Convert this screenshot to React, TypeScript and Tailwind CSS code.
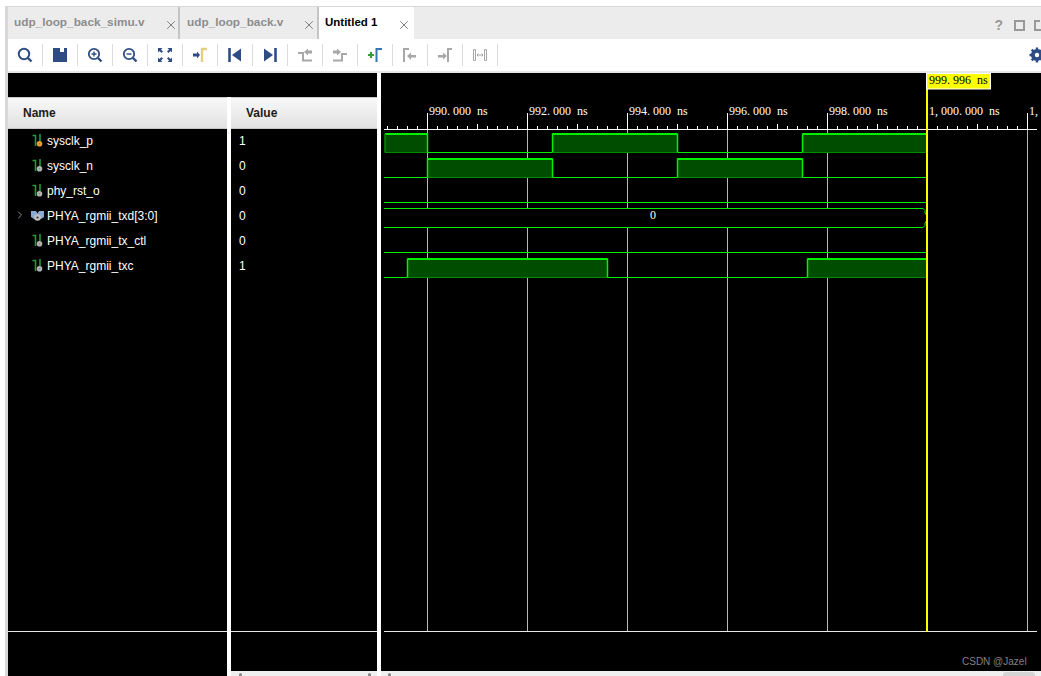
// Vivado 波形窗口 —— 标签栏 / 工具栏 / 名称值列 / 波形区
import type { ReactNode } from 'react';
import { X, ChevronRight } from 'lucide-react';

const SANS = 'font-["Liberation_Sans",Arial,sans-serif]';
const NAVY = '#2f4d85';
const GREY = '#a8a8a8';

function Tab({ label, active, className }: { label: string; active?: boolean; className: string }) {
  return (
    <div
      className={`flex h-full items-center justify-between font-bold ${className} ${
        active ? 'bg-white text-[11.5px] text-black' : 'border-r-[2px] border-[#c4c4c4] text-[11.8px] text-[#8c8c8c]'
      }`}
    >
      <span>{label}</span>
      <X size={14} strokeWidth={1.6} className="mt-[4px] text-[#777]" />
    </div>
  );
}

// 工具栏图标，统一 16x16 画布
const icons: ReactNode[] = [
  <>
    <circle cx="7" cy="7" r="5.2" fill="none" stroke={NAVY} strokeWidth="2" />
    <path d="M11 11l3.5 3.5" stroke={NAVY} strokeWidth="2.4" />
  </>,
  <path d="M1 1h7v4h4V1h3v14H1z" fill={NAVY} />,
  <>
    <circle cx="7" cy="7" r="5.2" fill="none" stroke={NAVY} strokeWidth="1.8" />
    <path d="M11 11l3.5 3.5" stroke={NAVY} strokeWidth="2.4" />
    <path d="M4.5 7h5M7 4.5v5" stroke={NAVY} strokeWidth="1.4" />
  </>,
  <>
    <circle cx="7" cy="7" r="5.2" fill="none" stroke={NAVY} strokeWidth="1.8" />
    <path d="M11 11l3.5 3.5" stroke={NAVY} strokeWidth="2.4" />
    <path d="M4.5 7h5" stroke={NAVY} strokeWidth="1.4" />
  </>,
  <path
    d="M1 1h4.5L4 2.5 6 4.5 4.5 6 2.5 4 1 5.5zM15 1v4.5L13.5 4l-2 2L10 4.5l2-2L10.5 1zM1 15v-4.5L2.5 12l2-2L6 11.5l-2 2L5.5 15zM15 15h-4.5L12 13.5l-2-2 1.5-1.5 2 2 1.5-1.5z"
    fill={NAVY}
  />,
  <>
    <path d="M1 6.5h4v-2l3 3.5-3 3.5v-2H1z" fill={NAVY} />
    <path d="M10 15V2h5" fill="none" stroke="#e6cf7c" strokeWidth="2.4" />
  </>,
  <>
    <path d="M2.5 1v14" stroke={NAVY} strokeWidth="2.6" />
    <path d="M14 1.5v13L5 8z" fill={NAVY} />
  </>,
  <>
    <path d="M13.5 1v14" stroke={NAVY} strokeWidth="2.6" />
    <path d="M2 1.5v13L11 8z" fill={NAVY} />
  </>,
  <>
    <path d="M1 6h5v7.5h9" fill="none" stroke={GREY} strokeWidth="2" />
    <path d="M7 5l4-3.5v2h4v3h-4v2z" fill={GREY} />
  </>,
  <>
    <path d="M15 7h-5v6.5H1" fill="none" stroke={GREY} strokeWidth="2" />
    <path d="M9 5L5 1.5v2H1v3h4v2z" fill={GREY} />
  </>,
  <>
    <path d="M1 8h6M4 5v6" stroke="#3c9a3c" strokeWidth="2.2" />
    <path d="M9.5 15V2H15" fill="none" stroke="#2f77b5" strokeWidth="2" />
  </>,
  <>
    <path d="M2 15V2h5" fill="none" stroke={GREY} strokeWidth="2" />
    <path d="M5 9l4-3.5V8h5v2.500H9V13z" fill={GREY} />
  </>,
  <>
    <path d="M1 8h5V5.500l4 3.500-4 3.500V10.500H1z" fill={GREY} />
    <path d="M11 15V2h4" fill="none" stroke={GREY} strokeWidth="2" />
  </>,
  <path
    d="M1.5 2.500h2v11h-2zM12.5 2.500h2v11h-2zM5 8h6M6.500 6.500L5 8l1.500 1.500M9.500 6.500L11 8l-1.500 1.500"
    fill="none"
    stroke={GREY}
    strokeWidth="1"
  />,
];

function Toolbar() {
  return (
    <div className="flex h-[32px] shrink-0 items-center bg-white pl-[9px]">
      {icons.map((icon, i) => (
        <div key={i} className="flex w-[35px] items-center">
          <svg width="16" height="16" viewBox="0 0 16 16" className="shrink-0">
            {icon}
          </svg>
          <div className="ml-[9px] h-[22px] w-px bg-[#dcdcdc]" />
        </div>
      ))}
      <svg width="16" height="16" viewBox="0 0 16 16" className="ml-auto mr-[-4px] shrink-0">
        <circle cx="8" cy="8" r="4.5" fill="none" stroke={NAVY} strokeWidth="3.2" />
        <path d="M8 .5v15M.5 8h15M2.7 2.7l10.6 10.6M13.3 2.7L2.7 13.3" stroke={NAVY} strokeWidth="2.4" />
        <circle cx="8" cy="8" r="2.2" fill="#fff" />
      </svg>
    </div>
  );
}

function SignalIcon({ dot }: { dot: string }) {
  return (
    <svg width="12" height="13" viewBox="0 0 12 13" className="shrink-0">
      <path d="M0.5 1.5h3V12" fill="none" stroke="#1c9c3c" strokeWidth="1.6" />
      <path d="M8 0v7" fill="none" stroke="#1c9c3c" strokeWidth="1.6" />
      <circle cx="7.5" cy="9.7" r="2.8" fill={dot} />
      <circle cx="7.5" cy="9.7" r="0.8" fill="#555" opacity="0.5" />
    </svg>
  );
}

function BusIcon() {
  return (
    <svg width="13" height="12" viewBox="0 0 13 12" className="ml-[-1px] shrink-0">
      <path d="M0 1h5l1.5 2.5L8 1h5v6l-3 2H3L0 7z" fill="#8aaad2" />
      <circle cx="6.5" cy="7.5" r="3.3" fill="#c0c0c0" />
      <circle cx="6.5" cy="7.5" r="1.1" fill="#333" />
    </svg>
  );
}

const signals = [
  { name: 'sysclk_p', value: '1', dot: '#e8a030' },
  { name: 'sysclk_n', value: '0', dot: '#b4b4b4' },
  { name: 'phy_rst_o', value: '0', dot: '#b4b4b4' },
  { name: 'PHYA_rgmii_txd[3:0]', value: '0', dot: '', bus: true },
  { name: 'PHYA_rgmii_tx_ctl', value: '0', dot: '#b4b4b4' },
  { name: 'PHYA_rgmii_txc', value: '1', dot: '#b4b4b4' },
];

function HeaderCell({ label }: { label: string }) {
  return (
    <div className="flex h-[32px] shrink-0 items-center border-y border-[#c8c8c8] bg-gradient-to-b from-[#f8f8f8] to-[#e2e2e2] pl-[15px] text-[12px] font-bold text-[#1c1c1c]">
      {label}
    </div>
  );
}

function ColumnFooter() {
  return <div className="mt-auto h-[40px] shrink-0 border-t border-[#e8e8e8] bg-black" />;
}

function NameColumn() {
  return (
    <div className="flex h-full w-[219px] shrink-0 flex-col bg-black">
      <HeaderCell label="Name" />
      <div className="flex flex-col">
        {signals.map((s) => (
          <div key={s.name} className="relative flex h-[25px] items-center pb-[2px] pl-[24px] text-[12px] text-white">
            {s.bus && (
              <ChevronRight size={12} strokeWidth={1.5} className="absolute left-[6px] top-[5px] text-[#bbb]" />
            )}
            {s.bus ? <BusIcon /> : <SignalIcon dot={s.dot} />}
            <span className="ml-[3px]">{s.name}</span>
          </div>
        ))}
      </div>
      <ColumnFooter />
      <div className="h-[5px] shrink-0 bg-black" />
    </div>
  );
}

// 列底部的拖动小标记
function Caret({ className }: { className: string }) {
  return <div className={`absolute top-[2px] h-[3px] w-[3px] rounded-t-full bg-[#888] ${className}`} />;
}

function ValueColumn() {
  return (
    <div className="flex h-full w-[146px] shrink-0 flex-col bg-black">
      <HeaderCell label="Value" />
      <div className="flex flex-col">
        {signals.map((s) => (
          <div key={s.name} className="flex h-[25px] items-center pb-[2px] pl-[8px] text-[12px] text-white">
            {s.value}
          </div>
        ))}
      </div>
      <ColumnFooter />
      <div className="relative h-[5px] shrink-0 bg-[#efefef]">
        <Caret className="left-[8px]" />
        <Caret className="left-[137px]" />
      </div>
    </div>
  );
}

const BRIGHT = '#00f000';
const DARK = '#008a00';
const FILL = '#004d00';

// 单比特波形：edges 为翻转位置，y 取高低电平线
function Wave({ high, low, start, edges, end, from }: { high: number; low: number; start: boolean; edges: number[]; end: number; from: number }) {
  const xs = [from, ...edges, end];
  return (
    <>
      {xs.slice(0, -1).map((x, i) => {
        const isHigh = i % 2 === 0 ? start : !start;
        const nx = xs[i + 1];
        if (!isHigh) return <path key={i} d={`M${x} ${low}H${nx}`} stroke={BRIGHT} />;
        return (
          <g key={i}>
            <rect x={x} y={high} width={nx - x} height={low - high} fill={FILL} />
            <path d={`M${x} ${low}H${nx}`} stroke={DARK} />
            <path d={`M${x} ${high + 0.5}H${nx}`} stroke={BRIGHT} strokeWidth="2" />
            <path d={`M${x} ${low}V${high}`} stroke={i === 0 ? DARK : BRIGHT} strokeWidth="1.5" />
            {nx < end && <path d={`M${nx} ${high}V${low}`} stroke={BRIGHT} strokeWidth="1.5" />}
          </g>
        );
      })}
    </>
  );
}

// 等宽排布的标尺文字（每个字符 6px 一格）
function Mono({ x, y, fill, children }: { x: number; y: number; fill: string; children: string }) {
  const xs = children.split('').map((_, i) => x + i * 6).join(' ');
  return (
    <text x={xs} y={y} fill={fill} fontSize="12" fontFamily='"Liberation Serif", serif'>
      {children}
    </text>
  );
}

function WaveArea() {
  const majors = [427.5, 527.5, 627.5, 727.5, 827.5, 927.5, 1027.5];
  const labels = ['990.000 ns', '992.000 ns', '994.000 ns', '996.000 ns', '998.000 ns', '1,000.000 ns', '1,'];
  const minors: number[] = [];
  for (let x = 387.5; x < 1037; x += 10) minors.push(x);
  const CURSOR = 927;
  return (
    <div className="min-w-0 flex-1 self-stretch">
      <svg width="660" height="598" viewBox="381 73 660 598" className="block bg-black">
        {/* 标尺 */}
        <path d="M384 129.5H1037" stroke="#fff" />
        {minors.map((x) => {
          const k = Math.round((x - 427.5) / 10);
          if (k % 10 === 0) return null;
          return <path key={x} d={`M${x} ${k % 5 === 0 ? 124 : 126}V129`} stroke="#fff" />;
        })}
        {majors.map((x, i) => (
          <g key={x}>
            <path d={`M${x} 113V129`} stroke="#fff" />
            <Mono x={x + 1.5} y={115} fill="#fff">
              {labels[i]}
            </Mono>
          </g>
        ))}
        {/* 网格线 */}
        {majors.map((x) => (
          <path key={x} d={`M${x} 130V631`} stroke="#b8b8b8" />
        ))}
        {/* 波形 */}
        <Wave high={133.5} low={152.5} start from={385} edges={[427.5, 552.5, 677.5, 802.5]} end={CURSOR} />
        <Wave high={158.5} low={177.5} start={false} from={384} edges={[427.5, 552.5, 677.5, 802.5]} end={CURSOR} />
        <path d={`M384 202.5H${CURSOR}`} stroke={BRIGHT} />
        <rect x="384" y="209" width="541" height="18" fill="#000" />
        <path d="M384 208.5H923L925 210.5V213L926.5 215M926.5 221L925 223V225.5L923 227.5H384" fill="none" stroke={BRIGHT} />
        <Mono x={650} y={219} fill="#fff">
          0
        </Mono>
        <path d={`M384 252.5H${CURSOR}`} stroke={BRIGHT} />
        <Wave high={258.5} low={277.5} start={false} from={384} edges={[407.5, 607.5, 807.5]} end={CURSOR} />
        {/* 底部分隔线 */}
        <path d="M384 631.5H1037" stroke="#e8e8e8" />
        {/* 游标 */}
        <path d="M927 73V631.5" stroke="#ffff00" strokeWidth="2" />
        <rect x="926.5" y="73.5" width="64" height="15.5" fill="#ffff00" stroke="#fff" />
        <Mono x={929} y={84} fill="#000">
          999.996 ns
        </Mono>
        <text x="962" y="665" fill="#808080" fontSize="10" fontFamily='"Liberation Sans", Arial, sans-serif'>
          CSDN @Jazel
        </text>
      </svg>
      <div className="relative h-[5px] bg-[#efefef]">
        <Caret className="left-[7px]" />
        <div className="absolute left-[622px] top-[1px] h-[8px] w-[32px] rounded-t-[3px] bg-[#d4d4d4]" />
      </div>
    </div>
  );
}

export default function App() {
  return (
    <div className={`h-[676px] w-[1041px] overflow-hidden bg-white pt-[6px] ${SANS}`}>
      <div className="ml-[5px] flex h-[670px] flex-col border-l-[3px] border-t border-[#d8d8d8]">
        <div className="flex h-[32px] shrink-0 items-center bg-[#ececec]">
          <Tab label="udp_loop_back_simu.v" className="w-[172px] pl-[6px]" />
          <Tab label="udp_loop_back.v" className="w-[139px] pl-[7px] pr-[1px]" />
          <Tab label="Untitled 1" active className="w-[95px] pl-[6px] pr-[3px]" />
          <div className="ml-auto mr-[-4px] mt-[4px] flex items-center text-[#999]">
            <span className="mr-[11px] text-[14px] font-bold leading-none">?</span>
            <div className="mr-[9px] h-[11px] w-[11px] border-2 border-[#999]" />
            <svg width="11" height="11" viewBox="0 0 11 11" className="shrink-0">
              <path d="M6 1H1v9h9V6" fill="none" stroke="#999" strokeWidth="2" />
            </svg>
          </div>
        </div>
        <Toolbar />
        <div className="h-[2px] shrink-0 bg-[#e8e8e8]" />
        <div className="flex min-h-0 flex-1">
          <div className="flex w-[369px] shrink-0 flex-col self-stretch">
            <div className="h-[24px] shrink-0 bg-black" />
            <div className="flex min-h-0 flex-1 gap-[4px]">
              <NameColumn />
              <ValueColumn />
            </div>
          </div>
          <div className="w-[4px] shrink-0 bg-white" />
          <WaveArea />
        </div>
      </div>
    </div>
  );
}
